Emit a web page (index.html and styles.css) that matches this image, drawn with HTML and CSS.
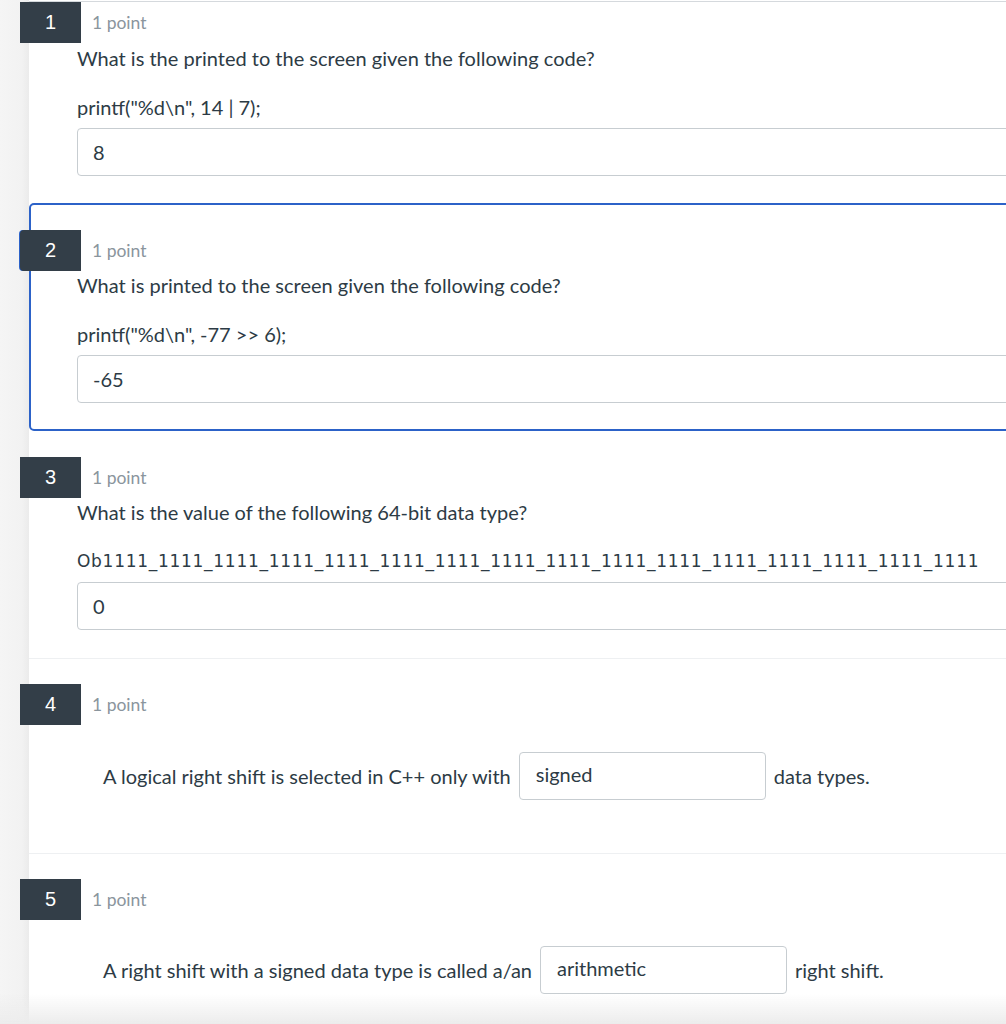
FILE: index.html
```html
<!DOCTYPE html>
<html lang="en">
<head>
<meta charset="utf-8">
<title>Quiz</title>
<link rel="stylesheet" href="styles.css">
</head>
<body>
<div class="page">
  <div class="rail"></div>
  <main class="main">
    <section class="q q-first">
      <div class="badge">1</div>
      <div class="head">1 point</div>
      <p class="qtext">What is the printed to the screen given the following code?</p>
      <p class="code">printf("%d\n", 14 | 7);</p>
      <input class="answer" type="text" value="8" readonly>
    </section>

    <section class="q q-active">
      <div class="badge badge-active">2</div>
      <div class="head">1 point</div>
      <p class="qtext">What is printed to the screen given the following code?</p>
      <p class="code">printf("%d\n", -77 &gt;&gt; 6);</p>
      <input class="answer" type="text" value="-65" readonly>
    </section>

    <section class="q">
      <div class="badge">3</div>
      <div class="head">1 point</div>
      <p class="qtext">What is the value of the following 64-bit data type?</p>
      <p class="code bin">Ob1111_1111_1111_1111_1111_1111_1111_1111_1111_1111_1111_1111_1111_1111_1111_1111</p>
      <input class="answer" type="text" value="0" readonly>
    </section>

    <section class="q q-sep">
      <div class="badge">4</div>
      <div class="head">1 point</div>
      <div class="fill fill-4">
        <span>A logical right shift is selected in C++ only with</span>
        <input class="blank" type="text" value="signed" readonly>
        <span>data types.</span>
      </div>
    </section>

    <section class="q q-sep">
      <div class="badge">5</div>
      <div class="head">1 point</div>
      <div class="fill">
        <span>A right shift with a signed data type is called a/an</span>
        <input class="blank" type="text" value="arithmetic" readonly>
        <span>right shift.</span>
      </div>
    </section>
  </main>
</div>
<div class="bottom-fade"></div>
</body>
</html>
```

FILE: styles.css
```css
html, body {
  margin: 0;
  padding: 0;
  overflow: hidden;
  background: #ffffff;
}

body {
  font-family: Lato, "Open Sans", sans-serif;
  color: #2d3b45;
}

.page {
  display: flex;
  align-items: stretch;
  min-height: 1024px;
}

.rail {
  flex: none;
  width: 29px;
  background: linear-gradient(to right, #f5f5f5 0, #f2f2f2 75%, #ebebeb 100%);
}

.main {
  flex: none;
  width: 1100px;
  padding-top: 1px;
  background: #ffffff;
}

.q {
  position: relative;
  padding: 26px 0 28px 48px;
}

.q-first {
  padding-top: 0;
  border-top: 1px solid #d5d9dd;
  padding-bottom: 27px;
}

.q-active {
  border: 2px solid #2c62c8;
  border-radius: 5px;
  padding: 25px 0 26px 46px;
}

.q-sep {
  border-top: 1px solid #eef0f2;
  padding-top: 25px;
  padding-bottom: 53px;
}

.badge {
  position: absolute;
  left: -9px;
  top: 26px;
  width: 61px;
  height: 41px;
  background: #333e48;
  color: #ffffff;
  font-family: "Liberation Sans", Arial, sans-serif;
  font-size: 20px;
  display: flex;
  align-items: center;
  justify-content: center;
}

.q-first .badge {
  top: 0;
}

.q-sep .badge {
  top: 25px;
}

.badge-active {
  left: -11px;
  top: 25px;
  border-radius: 4px 0 0 4px;
  box-shadow: -1px 0 0 #2c62c8;
}

.head {
  height: 41px;
  padding-left: 15px;
  display: flex;
  align-items: center;
  font-size: 17.5px;
  color: #8a959d;
}

.qtext {
  margin: 0;
  font-size: 20px;
  line-height: 28px;
}

.q-first .qtext {
  margin-top: 1px;
}

.code {
  margin: 21px 0 0;
  font-size: 20px;
  line-height: 28px;
}

.bin {
  font-family: "DejaVu Sans", Verdana, sans-serif;
  font-size: 17px;
  letter-spacing: 0.72px;
}

.answer {
  display: block;
  box-sizing: border-box;
  margin: 7px 0 0;
  width: 1000px;
  height: 48px;
  padding: 0 15px;
  border: 1px solid #c7cdd1;
  border-radius: 4px;
  font-family: Lato, "Open Sans", sans-serif;
  font-size: 20px;
  color: #2d3b45;
  background: #ffffff;
  outline: none;
}

.fill {
  display: flex;
  align-items: center;
  gap: 8px;
  margin-top: 26px;
  padding-left: 26px;
  font-size: 20px;
}

.fill-4 {
  margin-top: 27px;
}

.blank {
  box-sizing: border-box;
  width: 247px;
  height: 48px;
  padding: 0 16px 4px;
  border: 1px solid #c7cdd1;
  border-radius: 4px;
  font-family: Lato, "Open Sans", sans-serif;
  font-size: 20px;
  color: #2d3b45;
  background: #ffffff;
  outline: none;
}

.bottom-fade {
  position: fixed;
  left: 0;
  right: 0;
  bottom: 0;
  height: 30px;
  background: linear-gradient(to bottom, rgba(238, 238, 238, 0), #ececec);
  pointer-events: none;
}
```
